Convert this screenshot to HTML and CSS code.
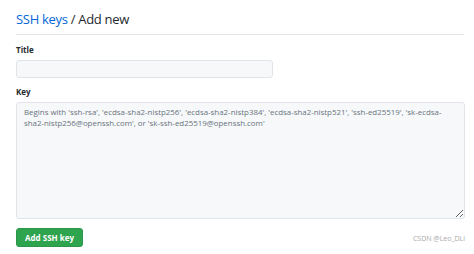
FILE: index.html
```html
<!DOCTYPE html>
<html lang="en">
<head>
  <meta charset="UTF-8" />
  <title>SSH keys / Add new</title>
  <link rel="stylesheet" href="styles.css">
</head>
<body>
  <div class="page">
    <h2 class="subhead"><a href="#">SSH keys</a> / Add new</h2>

    <form class="form">
      <div class="group">
        <label for="title">Title</label>
        <input type="text" id="title" class="input title-input">
      </div>

      <div class="group">
        <label for="key">Key</label>
        <textarea id="key" class="input key-input" placeholder="Begins with 'ssh-rsa', 'ecdsa-sha2-nistp256', 'ecdsa-sha2-nistp384', 'ecdsa-sha2-nistp521', 'ssh-ed25519', 'sk-ecdsa-sha2-nistp256@openssh.com', or 'sk-ssh-ed25519@openssh.com'"></textarea>
      </div>

      <div class="actions">
        <button type="button" class="btn">Add SSH key</button>
        <span class="mark">CSDN @Leo_DLi</span>
      </div>
    </form>
  </div>
</body>
</html>
```

FILE: styles.css
```css
* {
  box-sizing: border-box;
}
body {
  margin: 0;
  background: #fff;
  font-family: "Open Sans", "Noto Sans", sans-serif;
  color: #24292e;
}
.page {
  padding: 0 10px 0 16px;
  width: 474px;
}
.subhead {
  font-size: 13px;
  font-weight: 400;
  letter-spacing: -0.3px;
  margin: 0;
  padding: 11px 0 6px;
  border-bottom: 1px solid #e1e4e8;
  width: 448px;
  line-height: 17px;
}
.subhead a {
  color: #0366d6;
  text-decoration: none;
}
.form {
  display: flex;
  flex-direction: column;
  padding-top: 9px;
}
.group {
  display: flex;
  flex-direction: column;
  margin-bottom: 8px;
}
label {
  font-size: 8px;
  font-weight: 700;
  line-height: 12px;
  margin-bottom: 4px;
}
.input {
  background: #f6f8fa;
  border: 1px solid #e1e4e8;
  border-radius: 3px;
  font-family: inherit;
}
.title-input {
  width: 257px;
  height: 18px;
}
.key-input {
  width: 449px;
  height: 117px;
  resize: vertical;
  font-size: 7.9px;
  line-height: 11px;
  padding: 4px 7px;
}
.key-input::placeholder {
  color: #6a737d;
}
.actions {
  display: flex;
  justify-content: space-between;
  align-items: flex-end;
  width: 449px;
  margin-top: 1px;
}
.btn {
  background: #2ea44f;
  color: #fff;
  border: 1px solid #2c974b;
  border-radius: 3px;
  font-family: inherit;
  font-size: 8px;
  font-weight: 700;
  height: 19px;
  padding: 0 8px;
  width: 67px;
}
.mark {
  font-size: 7px;
  color: #aaa;
  margin-bottom: 4px;
}
```
